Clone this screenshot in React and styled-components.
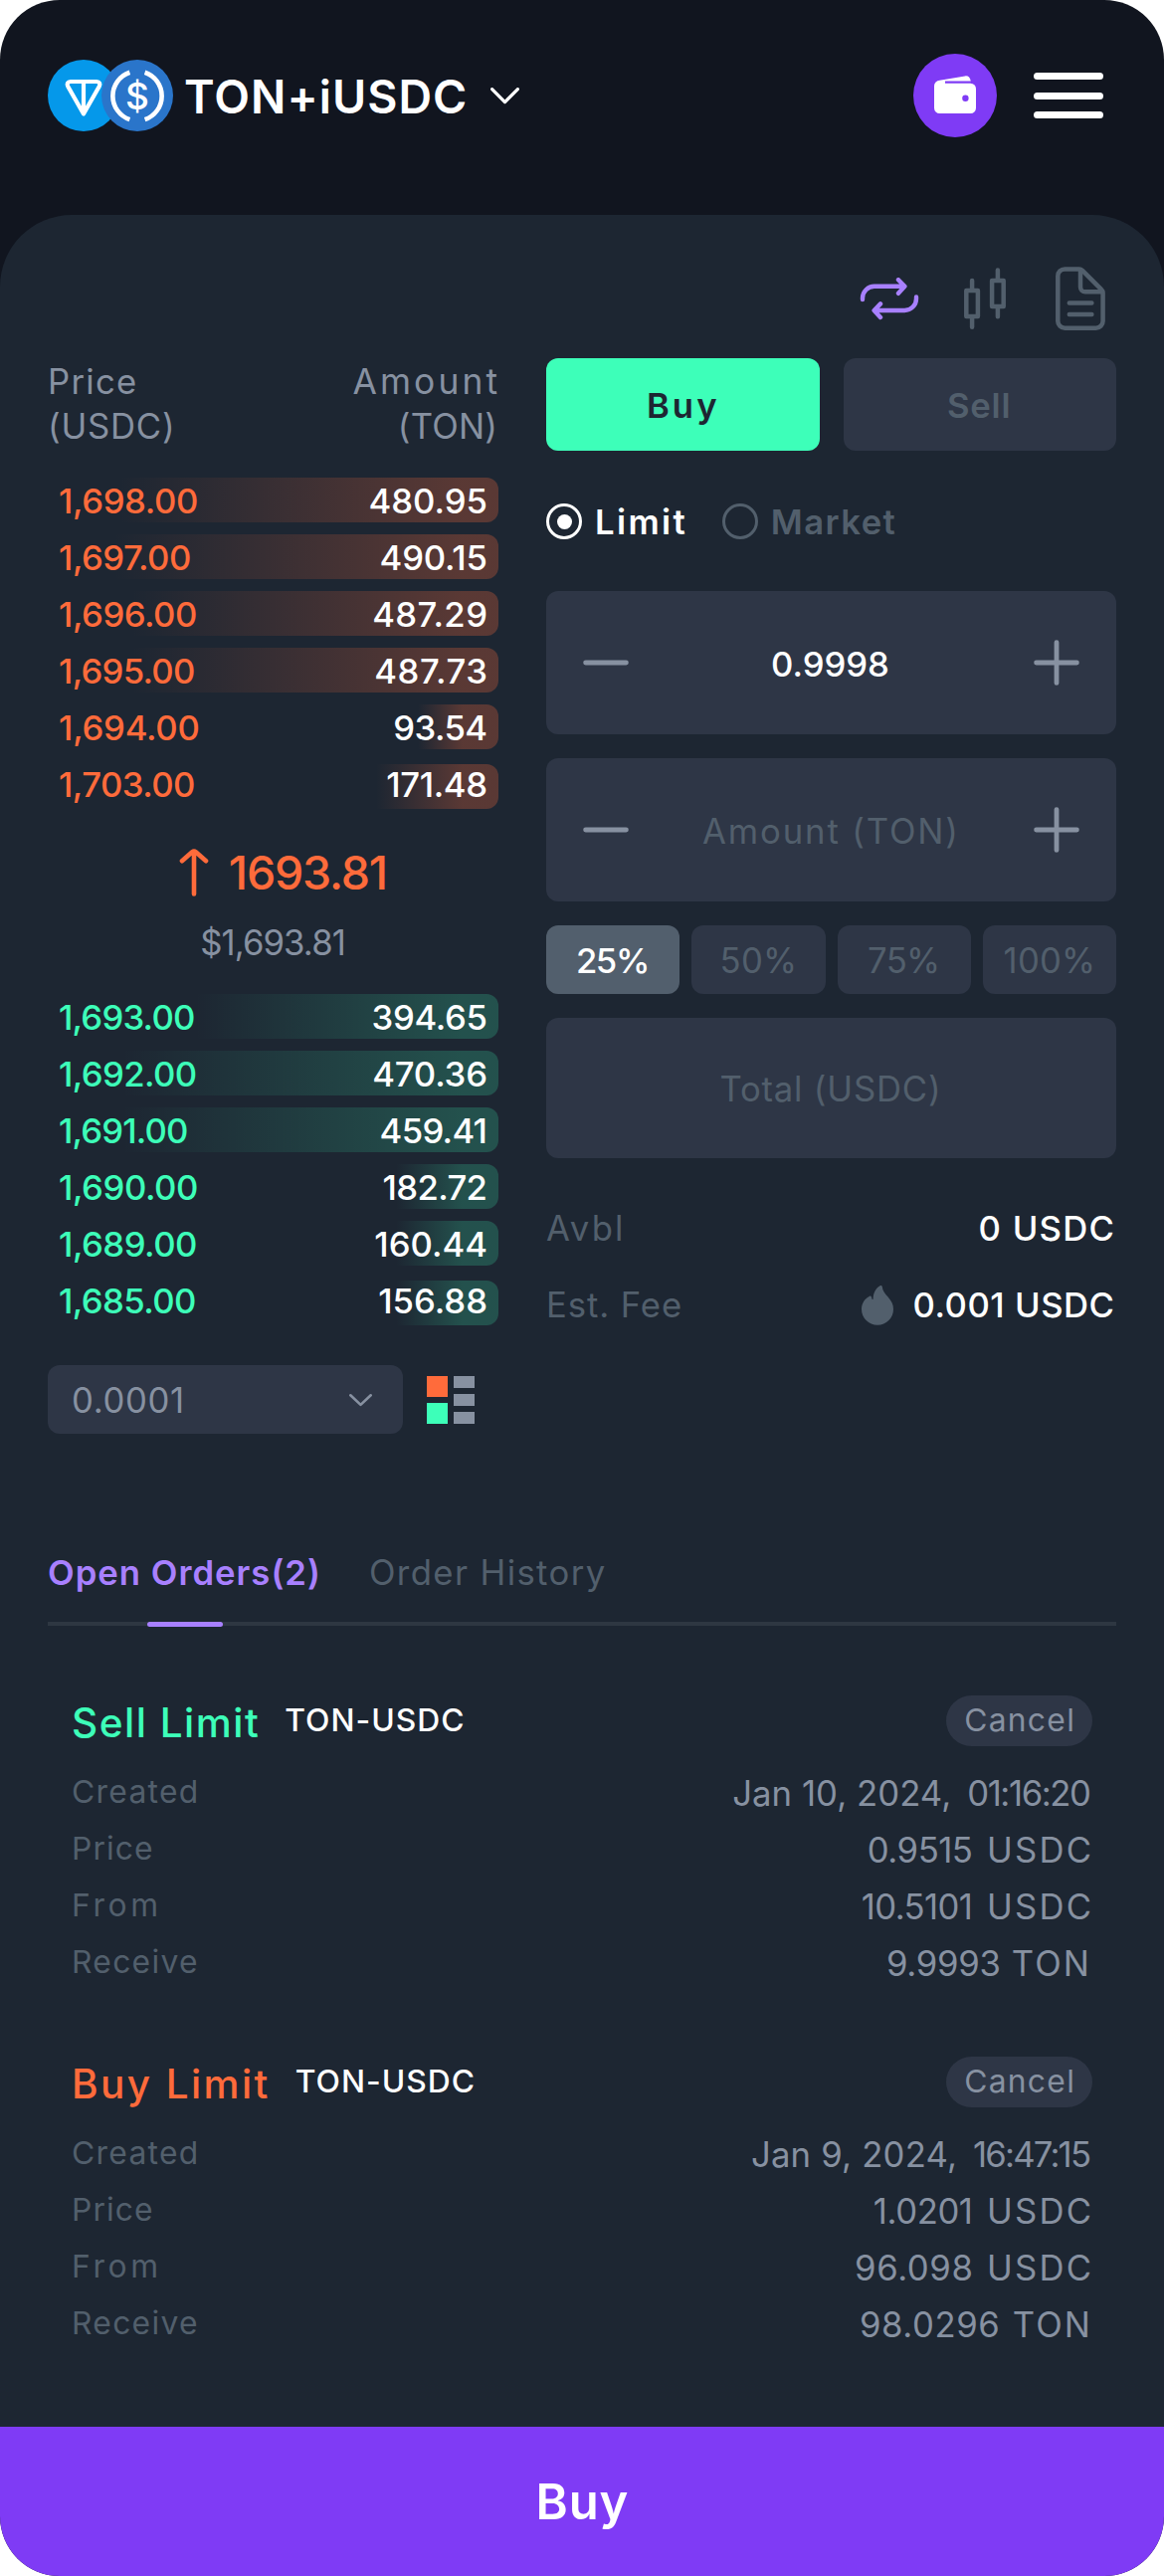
import React from 'react'
import styled, { createGlobalStyle } from 'styled-components'

const colors = {
  header: '#11151f',
  panel: '#1d2632',
  box: '#2e3646',
  line: '#2e3742',
  dim: '#525f6c',
  grey: '#8791a1',
  orange: '#ff6b3b',
  green: '#3dffb9',
  purple: '#7f3bf5',
  violet: '#a880ff'
}

const GlobalStyle = createGlobalStyle`
  body {
    margin: 0;
    background: #fff;
    font-family: Inter, 'Open Sans', sans-serif;
  }

  * {
    box-sizing: border-box;
  }

  svg {
    display: block;
    flex: none;
  }
`

const Screen = styled.div`
  width: 1170px;
  height: 2589px;
  display: flex;
  flex-direction: column;
  overflow: hidden;
  border-radius: 60px;
  background: ${colors.header};
`

const Text = styled.span`
  display: block;
  white-space: nowrap;
  font-size: ${p => p.$size || 34.7}px;
  font-weight: ${p => p.$weight || 400};
  line-height: 45px;
  color: ${p => colors[p.$color] || '#fff'};
  letter-spacing: ${p => p.$track || 0}px;
  margin-right: ${p => -(p.$track || 0)}px;
`

/* header */

const Header = styled.header`
  display: flex;
  align-items: center;
  height: 192px;
  margin-bottom: 24px;
  padding: 0 61px 0 48px;
`

const PairIcons = styled.div`
  display: flex;
  margin-right: 11px;

  svg + svg {
    margin-left: -18px;
  }
`

const PairName = styled(Text)`
  padding-top: 2px;
  margin-right: 23px;
`

const WalletButton = styled.button`
  display: flex;
  align-items: center;
  justify-content: center;
  width: 84px;
  height: 84px;
  margin: 0 37px 0 auto;
  padding: 0 0 2px;
  border: none;
  border-radius: 50%;
  background: ${colors.purple};
`

const Burger = styled.div`
  display: flex;
  flex-direction: column;
  gap: 12.5px;
  width: 70px;
`

const BurgerBar = styled.div`
  height: 7px;
  border-radius: 4px;
  background: #fff;
`

/* main panel */

const Panel = styled.main`
  height: 2223px;
  padding: 52px 48px 0;
  border-radius: 72px 72px 0 0;
  background: ${colors.panel};
`

const ViewTabs = styled.div`
  display: flex;
  align-items: center;
  justify-content: flex-end;
  height: 64px;
  margin-bottom: 28px;
  padding-right: 11px;

  svg:nth-child(2) {
    margin: 0 50px 0 45px;
  }
`

const Trade = styled.div`
  display: grid;
  grid-template-columns: 453px 573px;
  gap: 48px;
  height: 1082px;
`

const BookHead = styled.div`
  display: flex;
  justify-content: space-between;
  padding: 1px 1px 0 0;
  margin-bottom: 29px;
`

const HeadCell = styled.div`
  display: flex;
  flex-direction: column;
  align-items: ${p => p.$end ? 'flex-end' : 'flex-start'};
`

const BookList = styled.div`
  display: flex;
  flex-direction: column;
  gap: 12px;
`

const BookRow = styled.div`
  display: flex;
  align-items: center;
  justify-content: space-between;
  height: 45px;
  padding: 1px 11px 0 11px;
  border-radius: 12px;
  background: linear-gradient(
    to right,
    transparent ${p => p.$from}px,
    ${p => p.$side === 'green' ? 'rgba(61, 255, 185, 0.2)' : 'rgba(255, 107, 59, 0.27)'} 92%
  );

  &:last-child {
    margin-top: 3px;
    padding: 0 11px 4px 11px;
  }
`

const MidPrice = styled.div`
  display: flex;
  align-items: center;
  justify-content: center;
  gap: 20px;
  height: 60px;
  margin: 34px 0 18px;
  padding-left: 21px;
`

const MidUsd = styled.div`
  display: flex;
  justify-content: center;
  margin-bottom: 29px;
`

const BookFooter = styled.div`
  display: flex;
  align-items: center;
  gap: 24px;
  margin-top: 40px;
`

const Select = styled.div`
  display: flex;
  align-items: center;
  justify-content: space-between;
  width: 357px;
  height: 69px;
  padding: 1px 31px 0 24px;
  border-radius: 12px;
  background: ${colors.box};
`

/* order form */

const Sides = styled.div`
  display: grid;
  grid-template-columns: 1fr 1fr;
  gap: 24px;
`

const SideButton = styled.button`
  display: flex;
  align-items: center;
  justify-content: center;
  height: 93px;
  padding: 2px 2px 0 0;
  border: none;
  border-radius: 12px;
  font-family: inherit;
  background: ${p => p.$active ? colors.green : colors.box};
`

const Kinds = styled.div`
  display: flex;
  gap: 37px;
  margin: 53px 0 52px;
`

const Kind = styled.label`
  display: flex;
  align-items: center;
  gap: 13px;
  height: 36px;
`

const Radio = styled.span`
  display: flex;
  align-items: center;
  justify-content: center;
  width: 36px;
  height: 36px;
  border: 3px solid ${p => p.$active ? '#fff' : colors.dim};
  border-radius: 50%;

  &::after {
    content: '';
    display: ${p => p.$active ? 'block' : 'none'};
    width: 15px;
    height: 15px;
    border-radius: 50%;
    background: #fff;
  }
`

const Field = styled.div`
  display: flex;
  align-items: center;
  justify-content: ${p => p.$center ? 'center' : 'space-between'};
  height: ${p => p.$center ? 141 : 144}px;
  margin-bottom: 24px;
  padding: 0 37px;
  border-radius: 12px;
  background: ${colors.box};
`

const FieldText = styled(Text)`
  padding: 2px 2px 0 0;
`

const Percents = styled.div`
  display: grid;
  grid-template-columns: repeat(4, 1fr);
  gap: 12px;
  margin-bottom: 24px;
`

const Percent = styled.button`
  display: flex;
  align-items: center;
  justify-content: center;
  height: 69px;
  padding: 1px 0 0;
  border: none;
  border-radius: 12px;
  font-family: inherit;
  background: ${p => p.$active ? '#525f6d' : colors.box};
`

const Summary = styled.div`
  display: flex;
  flex-direction: column;
  gap: 32px;
  margin-top: 48px;
  padding-right: 2px;
`

const SummaryRow = styled.div`
  display: flex;
  align-items: center;
  justify-content: space-between;
  height: 45px;
`

const Fee = styled.div`
  display: flex;
  align-items: center;
  gap: 20px;
`

/* orders */

const Tabs = styled.nav`
  display: flex;
  gap: 49px;
  height: 104px;
  margin-top: 88px;
  border-bottom: 4px solid ${colors.line};
`

const Tab = styled.div`
  position: relative;
  display: flex;
  align-items: center;
  height: 100px;
`

const TabMark = styled.div`
  position: absolute;
  bottom: -5px;
  left: 100px;
  width: 76px;
  height: 5px;
  border-radius: 3px;
  background: ${colors.violet};
`

const Orders = styled.section`
  display: flex;
  flex-direction: column;
  gap: 66px;
  padding: 70px 24px 0;
`

const OrderHead = styled.div`
  display: flex;
  align-items: center;
  height: 51px;
  margin-bottom: 18px;
`

const OrderTitle = styled(Text)`
  padding-top: 4px;
  margin-right: 25px;
`

const OrderPair = styled(Text)`
  padding-bottom: 2px;
`

const CancelButton = styled.button`
  display: flex;
  align-items: center;
  justify-content: center;
  width: 147px;
  height: 51px;
  margin-left: auto;
  padding: 0 0 2px;
  border: none;
  border-radius: 26px;
  font-family: inherit;
  background: ${colors.box};
`

const OrderRow = styled.div`
  display: flex;
  align-items: center;
  justify-content: space-between;
  height: 57px;
`

const OrderLabel = styled(Text)`
  padding-bottom: 2px;
`

const OrderValue = styled.div`
  display: flex;
  gap: ${p => p.$gap || 14}px;
  padding: 2px ${p => p.$end || 1}px 0 0;
`

const Submit = styled.button`
  display: flex;
  align-items: center;
  justify-content: center;
  height: 150px;
  padding: 0;
  border: none;
  font-family: inherit;
  background: ${colors.purple};
`

const TonIcon = () => (
  <svg width='72' height='72' viewBox='0 0 72 72' fill='none'>
    <circle cx='36' cy='36' r='36' fill='#0598ea' />
    <path
      d='M22.8 22H49.2c2.8 0 3.9 2.4 2.6 4.7L36 54.5 20.2 26.7C18.9 24.4 20 22 22.8 22ZM36 22V53'
      stroke='#fff'
      strokeWidth='4.2'
      strokeLinejoin='round'
    />
  </svg>
)

const UsdcIcon = () => (
  <svg width='72' height='72' viewBox='0 0 72 72' fill='none'>
    <circle cx='36' cy='36' r='36' fill='#2a75ca' />
    <path
      d='M28.4 12.7A25 25 0 0 0 28.4 60.1M43.6 12.7A25 25 0 0 1 43.6 60.1'
      stroke='#fff'
      strokeWidth='4.6'
    />
    <text x='36' y='49.6' fill='#fff' fontSize='37' fontWeight='500' textAnchor='middle'>$</text>
  </svg>
)

const Chevron = ({ width, height, color, stroke }) => (
  <svg width={width} height={height} viewBox={`0 0 ${width} ${height}`} fill='none'>
    <path
      d={`M${stroke / 2} ${stroke / 2}L${width / 2} ${height - stroke / 2 - 0.8}L${width - stroke / 2} ${stroke / 2}`}
      stroke={color}
      strokeWidth={stroke}
      strokeLinecap='round'
      strokeLinejoin='round'
    />
  </svg>
)

const WalletIcon = () => (
  <svg width='42' height='38' viewBox='0 0 42 38'>
    <path
      fill='#fff'
      d='M5.5 4.8 31 .4q4.7-.6 5.8 5.2H11v2.1h25.5a5.5 5.5 0 0 1 5.5 5.5v19.3a5.5 5.5 0 0 1-5.5 5.5h-31A5.5 5.5 0 0 1 0 32.5V10.3a5.5 5.5 0 0 1 5.5-5.5Z'
    />
    <circle cx='31.4' cy='22.8' r='3.2' fill={colors.purple} />
  </svg>
)

const SwapIcon = () => (
  <svg width='60' height='43' viewBox='0 0 60 43' fill='none' stroke={colors.violet} strokeWidth='4.4' strokeLinecap='round' strokeLinejoin='round'>
    <path d='M3 22v-1.5A11.8 11.8 0 0 1 14.800 8.800H45M39 2.200l6.400 6.600L39 15.800' />
    <path d='M57 19.500v1.700A11.800 11.800 0 0 1 45.200 33H15M21 26.400 14.600 33l6.400 7' />
  </svg>
)

const CandlesIcon = () => (
  <svg width='42' height='62' viewBox='0 0 42 62' fill='none' stroke={colors.dim} strokeWidth='4.5' strokeLinecap='round' strokeLinejoin='round'>
    <path d='M2.3 23h11.6v26H2.3ZM8.1 13v9M8.1 50v9.7' />
    <path d='M28.1 13h11.6v26H28.1ZM33.9 2.4V12M33.9 40v9.2' />
  </svg>
)

const DocIcon = () => (
  <svg width='50' height='64' viewBox='0 0 50 64' fill='none' stroke={colors.dim} strokeWidth='4.5' strokeLinecap='round' strokeLinejoin='round'>
    <path d='M9.3 2.4H23.5a5 5 0 0 1 3.5 1.4L46 22.9a5 5 0 0 1 1.6 3.6V54.7a7 7 0 0 1-7 7H9.3a7 7 0 0 1-7-7V9.4a7 7 0 0 1 7-7Z' />
    <path d='M25 3v17.5a4.8 4.8 0 0 0 4.8 4.8H47M13.8 36.6h22.6M13.8 47.9h22.6' />
  </svg>
)

const ArrowUp = () => (
  <svg width='30' height='50' viewBox='0 0 30 50' fill='none' stroke={colors.orange} strokeWidth='4.6' strokeLinecap='round' strokeLinejoin='round'>
    <path d='M15 4v42.5M3 13.2 13.2 4.2q1.8-1.4 3.6 0L27 13.2' />
  </svg>
)

const Minus = () => (
  <svg width='46' height='46' viewBox='0 0 46 46' stroke={colors.grey} strokeWidth='4.8' strokeLinecap='round'>
    <path d='M2.6 23h40.8' />
  </svg>
)

const Plus = () => (
  <svg width='46' height='46' viewBox='0 0 46 46' stroke={colors.grey} strokeWidth='4.8' strokeLinecap='round'>
    <path d='M2.6 23h40.8M23 2.6v40.8' />
  </svg>
)

const Flame = () => (
  <svg width='32' height='40' viewBox='0 0 32 40'>
    <path
      fill={colors.dim}
      d='M18.6.3c1.3-.6 2 0 2.2 1.2.5 4 2.4 6.3 5.8 10C30 15.4 32 19 32 23.7a16 16 0 0 1-32 0C0 18 3 13.3 7.7 10.9c1.8-.9 2.5.1 2.6 2.5l1.3.5C11.6 8 14.2 2.5 18.6.3Z'
    />
  </svg>
)

const BookIcon = () => (
  <svg width='48' height='48' viewBox='0 0 48 48'>
    <path fill={colors.orange} d='M0 0h21v21H0z' />
    <path fill={colors.green} d='M0 27h21v21H0z' />
    <path fill={colors.grey} d='M27 0h21v12H27zM27 18h21v12H27zM27 36h21v12H27z' />
  </svg>
)

// price, price tracking, amount, amount tracking, depth bar start
const asks = [
  ['1,698.00', -0.39, '480.95', -0.02, 72],
  ['1,697.00', -0.5, '490.15', -0.19, 66],
  ['1,696.00', -0.48, '487.29', 0.41, 84],
  ['1,695.00', -0.75, '487.73', 0.56, 84],
  ['1,694.00', -0.25, '93.54', -0.6, 372],
  ['1,703.00', -0.56, '171.48', -0.38, 330]
]

const bids = [
  ['1,693.00', -0.81, '394.65', -0.33, 148],
  ['1,692.00', -0.6, '470.36', -0.18, 74],
  ['1,691.00', -0.86, '459.41', -0.7, 74],
  ['1,690.00', -0.45, '182.72', -0.66, 350],
  ['1,689.00', -0.5, '160.44', 0, 350],
  ['1,685.00', -0.6, '156.88', -0.01, 350]
]

const percents = [
  ['25%', -1.41],
  ['50%', 0.27],
  ['75%', -0.69],
  ['100%', 0.21]
]

const orders = [
  {
    title: 'Sell Limit',
    track: 1.5,
    color: 'green',
    rows: [
      { label: 'Created', track: 1.3, parts: [['Jan 10, 2024,', 0.06], ['01:16:20', -1.4]], gap: 16 },
      { label: 'Price', track: 1.1, parts: [['0.9515', -0.49], ['USDC', 2.2]] },
      { label: 'From', track: 3.6, parts: [['10.5101', -0.62], ['USDC', 2.2]] },
      { label: 'Receive', track: 1.3, parts: [['9.9993', -0.28], ['TON', 2.06]], gap: 11, end: 3 }
    ]
  },
  {
    title: 'Buy Limit',
    track: 2.4,
    color: 'orange',
    rows: [
      { label: 'Created', track: 1.3, parts: [['Jan 9, 2024,', 0.2], ['16:47:15', -1.8]], gap: 16 },
      { label: 'Price', track: 1.1, parts: [['1.0201', -0.43], ['USDC', 2.2]] },
      { label: 'From', track: 3.6, parts: [['96.098', 0.6], ['USDC', 2.2]] },
      { label: 'Receive', track: 1.3, parts: [['98.0296', 0.6], ['TON', 2.06]], gap: 13, end: 2 }
    ]
  }
]

const BookSide = ({ rows, side }) => (
  <BookList>
    {rows.map(([price, priceTrack, amount, amountTrack, from]) => (
      <BookRow key={price} $side={side} $from={from}>
        <Text $weight={450} $color={side} $track={priceTrack}>{price}</Text>
        <Text $weight={450} $track={amountTrack}>{amount}</Text>
      </BookRow>
    ))}
  </BookList>
)

const OrderBook = () => (
  <div>
    <BookHead>
      <HeadCell>
        <Text $color='grey' $track={1.26}>Price</Text>
        <Text $color='grey' $track={0.78}>(USDC)</Text>
      </HeadCell>
      <HeadCell $end>
        <Text $size={35.4} $color='grey' $track={3.1}>Amount</Text>
        <Text $color='grey' $track={0.2}>(TON)</Text>
      </HeadCell>
    </BookHead>
    <BookSide rows={asks} side='orange' />
    <MidPrice>
      <ArrowUp />
      <Text $size={46.5} $weight={450} $color='orange' $track={-1.21}>1693.81</Text>
    </MidPrice>
    <MidUsd>
      <Text $color='grey' $track={-0.91}>$1,693.81</Text>
    </MidUsd>
    <BookSide rows={bids} side='green' />
    <BookFooter>
      <Select>
        <Text $color='grey' $track={0.65}>0.0001</Text>
        <Chevron width={23} height={13} color={colors.grey} stroke={2.6} />
      </Select>
      <BookIcon />
    </BookFooter>
  </div>
)

const OrderForm = () => (
  <div>
    <Sides>
      <SideButton $active>
        <Text $weight={600} $color='panel' $track={3.1}>Buy</Text>
      </SideButton>
      <SideButton>
        <Text $weight={600} $color='dim' $track={0.78}>Sell</Text>
      </SideButton>
    </Sides>
    <Kinds>
      <Kind>
        <Radio $active />
        <Text $weight={600} $track={2.4}>Limit</Text>
      </Kind>
      <Kind>
        <Radio />
        <Text $weight={600} $color='dim' $track={1.4}>Market</Text>
      </Kind>
    </Kinds>
    <Field>
      <Minus />
      <FieldText $weight={450} $track={-0.04}>0.9998</FieldText>
      <Plus />
    </Field>
    <Field>
      <Minus />
      <FieldText $color='dim' $track={1.85}>Amount (TON)</FieldText>
      <Plus />
    </Field>
    <Percents>
      {percents.map(([label, track], i) => (
        <Percent key={label} $active={i === 0}>
          <Text $weight={i === 0 ? 500 : 400} $color={i === 0 ? 'white' : 'dim'} $track={track}>{label}</Text>
        </Percent>
      ))}
    </Percents>
    <Field $center>
      <FieldText $color='dim' $track={0.8}>Total (USDC)</FieldText>
    </Field>
    <Summary>
      <SummaryRow>
        <Text $color='dim' $track={2.2}>Avbl</Text>
        <Text $weight={450} $track={1.25}>0 USDC</Text>
      </SummaryRow>
      <SummaryRow>
        <Text $color='dim' $track={0.9}>Est. Fee</Text>
        <Fee>
          <Flame />
          <Text $weight={450} $track={0.49}>0.001 USDC</Text>
        </Fee>
      </SummaryRow>
    </Summary>
  </div>
)

const Order = ({ title, track, color, rows }) => (
  <div>
    <OrderHead>
      <OrderTitle $size={40.5} $weight={450} $color={color} $track={track}>{title}</OrderTitle>
      <OrderPair $size={31.8} $weight={450} $track={1.01}>TON-USDC</OrderPair>
      <CancelButton>
        <Text $size={31.8} $color='grey' $track={1.29}>Cancel</Text>
      </CancelButton>
    </OrderHead>
    {rows.map(row => (
      <OrderRow key={row.label}>
        <OrderLabel $size={31.8} $color='dim' $track={row.track}>{row.label}</OrderLabel>
        <OrderValue $gap={row.gap} $end={row.end}>
          {row.parts.map(([part, partTrack]) => (
            <Text key={part} $color='grey' $track={partTrack}>{part}</Text>
          ))}
        </OrderValue>
      </OrderRow>
    ))}
  </div>
)

export default function App () {
  return (
    <>
      <GlobalStyle />
      <Screen>
        <Header>
          <PairIcons>
            <TonIcon />
            <UsdcIcon />
          </PairIcons>
          <PairName $size={46.5} $weight={600} $track={1.03}>TON+iUSDC</PairName>
          <Chevron width={29} height={17} color='#fff' stroke={3.2} />
          <WalletButton>
            <WalletIcon />
          </WalletButton>
          <Burger>
            <BurgerBar />
            <BurgerBar />
            <BurgerBar />
          </Burger>
        </Header>
        <Panel>
          <ViewTabs>
            <SwapIcon />
            <CandlesIcon />
            <DocIcon />
          </ViewTabs>
          <Trade>
            <OrderBook />
            <OrderForm />
          </Trade>
          <Tabs>
            <Tab>
              <Text $weight={600} $color='violet' $track={1}>Open Orders(2)</Text>
              <TabMark />
            </Tab>
            <Tab>
              <Text $color='dim' $track={1.38}>Order History</Text>
            </Tab>
          </Tabs>
          <Orders>
            {orders.map(order => <Order key={order.title} {...order} />)}
          </Orders>
        </Panel>
        <Submit>
          <Text $size={49} $weight={600} $track={0.85}>Buy</Text>
        </Submit>
      </Screen>
    </>
  )
}
